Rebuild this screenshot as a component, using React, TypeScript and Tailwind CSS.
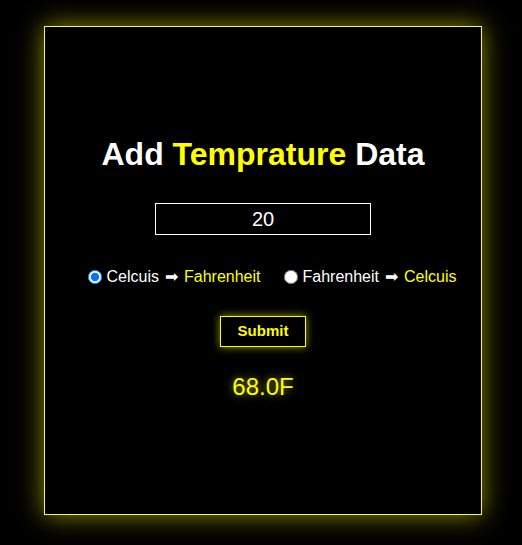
import React, { useState } from "react";

export default function App() {
  const [mode, setMode] = useState<"c2f" | "f2c">("c2f");
  const [val, setVal] = useState("20");
  return (
    <div className="min-h-[545px] w-[522px] bg-black pt-[26px] pl-[44px]" style={{ fontFamily: '"Liberation Sans", Arial, sans-serif' }}>
      <div className="w-[438px] h-[489px] border border-[#f5f56a] shadow-[0_0_24px_rgba(255,255,0,0.55)] flex flex-col items-center pt-[111px]">
        <h1 className="text-[32px] font-bold text-white leading-none">
          Add <span className="text-[#ffff00]">Temprature</span> Data
        </h1>
        <input
          value={val}
          onChange={(e) => setVal(e.target.value)}
          className="mt-[33px] w-[216px] h-[32px] bg-black border border-white text-white text-center text-[20px] outline-none"
        />
        <div className="mt-[30px] flex items-center text-[16px] text-white ml-[18px]">
          <label className="flex items-center">
            <input type="radio" name="m" checked={mode === "c2f"} onChange={() => setMode("c2f")} className="m-0 mr-[5px] w-[14px] h-[14px]" />
            Celcuis <span className="mx-[6px]">➡</span> <span className="text-[#ffff00]">Fahrenheit</span>
          </label>
          <label className="flex items-center ml-[23px]">
            <input type="radio" name="m" checked={mode === "f2c"} onChange={() => setMode("f2c")} className="m-0 mr-[5px] w-[14px] h-[14px]" />
            Fahrenheit <span className="mx-[6px]">➡</span> <span className="text-[#ffff00]">Celcuis</span>
          </label>
        </div>
        <button className="mt-[27px] w-[86px] h-[31px] border border-[#ffff00] text-[#ffff00] font-bold text-[15px] shadow-[0_0_8px_rgba(255,255,0,0.6)] bg-black">
          Submit
        </button>
        <div className="mt-[22px] text-[24px] text-[#ffff00] [text-shadow:0_0_8px_rgba(255,255,0,0.6)]">68.0F</div>
      </div>
    </div>
  );
}
